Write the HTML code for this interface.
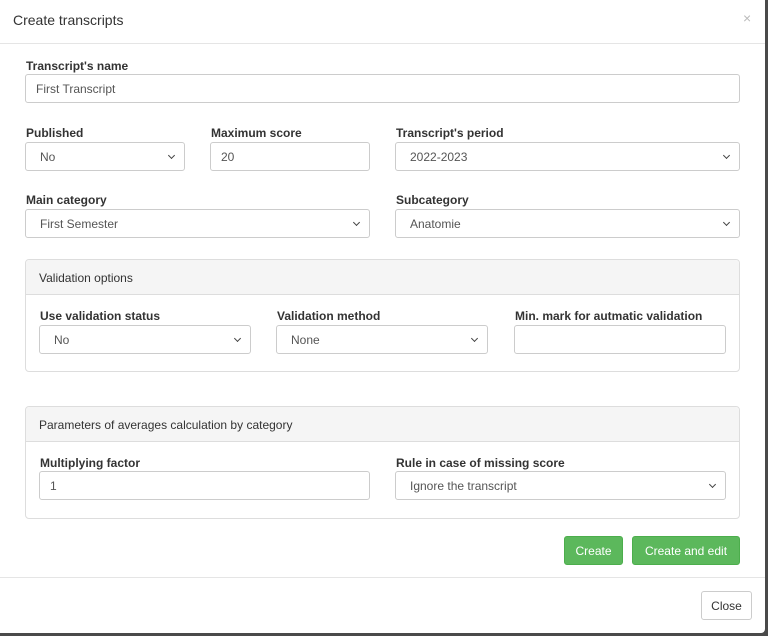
<!DOCTYPE html>
<html><head><meta charset="utf-8"><style>
*{box-sizing:border-box;margin:0;padding:0}
body{width:768px;height:636px;background:#4a4a4a;font-family:"Liberation Sans",sans-serif;color:#333;position:relative;overflow:hidden}
.modal{position:absolute;left:0;top:0;width:765px;height:633px;background:#fff;border-radius:0 0 4px 0}
.a{position:absolute}
.lbl{position:absolute;font-size:12px;font-weight:bold;color:#333}
.in{position:absolute;height:29px;border:1px solid #ccc;border-radius:3px;font-size:12px;color:#555;padding-left:14px;line-height:28px;background:#fff}
.sel::after{content:"";position:absolute;right:10px;top:10px;width:4px;height:4px;border-right:1.8px solid #444;border-bottom:1.8px solid #444;transform:rotate(45deg)}
.panel{position:absolute;border:1px solid #ddd;border-radius:4px}
.ph{height:35px;background:#f5f5f5;border-bottom:1px solid #ddd;font-size:12px;color:#333;padding:11px 13px;border-radius:4px 4px 0 0}
.btn{position:absolute;height:29px;border-radius:3px;font-size:12px;line-height:28px;text-align:center}
.g{background:#5cb85c;color:#fff;border:1px solid #4cae4c}
</style></head><body>
<div class="modal">
<div class="a" style="left:13px;top:12px;font-size:14px;color:#333">Create transcripts</div>
<div class="a" style="left:743px;top:10px;font-size:14px;color:#bbb">×</div>
<div class="a" style="left:0;top:43px;width:765px;height:1px;background:#e5e5e5"></div>

<div class="lbl" style="left:26px;top:59px">Transcript's name</div>
<div class="in" style="left:25px;top:74px;width:715px;padding-left:10px">First Transcript</div>

<div class="lbl" style="left:26px;top:126px">Published</div>
<div class="in sel" style="left:25px;top:142px;width:160px">No</div>
<div class="lbl" style="left:211px;top:126px">Maximum score</div>
<div class="in" style="left:210px;top:142px;width:160px;padding-left:10px">20</div>
<div class="lbl" style="left:396px;top:126px">Transcript's period</div>
<div class="in sel" style="left:395px;top:142px;width:345px">2022-2023</div>

<div class="lbl" style="left:26px;top:193px">Main category</div>
<div class="in sel" style="left:25px;top:209px;width:345px">First Semester</div>
<div class="lbl" style="left:396px;top:193px">Subcategory</div>
<div class="in sel" style="left:395px;top:209px;width:345px">Anatomie</div>

<div class="panel" style="left:25px;top:259px;width:715px;height:113px"><div class="ph">Validation options</div></div>
<div class="lbl" style="left:40px;top:309px">Use validation status</div>
<div class="in sel" style="left:39px;top:325px;width:212px">No</div>
<div class="lbl" style="left:277px;top:309px">Validation method</div>
<div class="in sel" style="left:276px;top:325px;width:212px">None</div>
<div class="lbl" style="left:515px;top:309px">Min. mark for autmatic validation</div>
<div class="in" style="left:514px;top:325px;width:212px"></div>

<div class="panel" style="left:25px;top:406px;width:715px;height:113px"><div class="ph">Parameters of averages calculation by category</div></div>
<div class="lbl" style="left:40px;top:456px">Multiplying factor</div>
<div class="in" style="left:39px;top:471px;width:331px;padding-left:10px">1</div>
<div class="lbl" style="left:396px;top:456px">Rule in case of missing score</div>
<div class="in sel" style="left:395px;top:471px;width:331px">Ignore the transcript</div>

<div class="btn g" style="left:564px;top:536px;width:59px">Create</div>
<div class="btn g" style="left:632px;top:536px;width:108px">Create and edit</div>

<div class="a" style="left:0;top:577px;width:765px;height:1px;background:#e5e5e5"></div>
<div class="btn" style="left:701px;top:591px;width:51px;border:1px solid #ccc;color:#333;background:#fff">Close</div>
</div>
</body></html>
